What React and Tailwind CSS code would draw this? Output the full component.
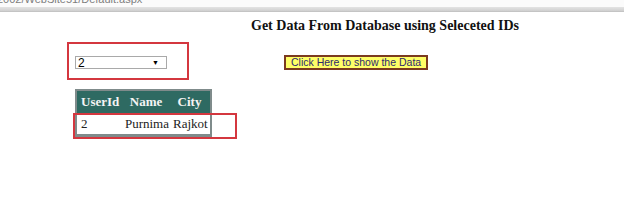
export default function App() {
  return (
    <div className="w-[624px] h-[214px] bg-white overflow-hidden relative" style={{ fontFamily: '"Liberation Serif", serif' }}>
      {/* address bar remnant */}
      <div className="h-[7px] overflow-hidden bg-[#fbfbfb]">
        <div className="-mt-[7px] -ml-[3px] text-[11px] leading-[13px] text-[#7e7e7e]" style={{ fontFamily: '"Liberation Sans", sans-serif' }}>
          2002/WebSite51/Default.aspx
        </div>
      </div>
      <div className="h-[5px] bg-gradient-to-b from-[#e4e4e4] to-[#cfcfcf] border-b border-[#c4c4c4]"></div>

      <h1 className="pl-[251px] pt-[5px] text-[14px] leading-[17px] font-bold text-[#111]">
        Get Data From Database using Seleceted IDs
      </h1>

      <div className="flex items-start mt-[8px]">
        <div className="ml-[67px] w-[122px] h-[38px] border-2 border-[#d4373f] pl-[6px] pt-[12px]">
          <div className="w-[92px] h-[13px] border border-[#a9a9a9] bg-white flex items-center justify-between pl-[2px] pr-[7px]" style={{ fontFamily: '"Liberation Sans", sans-serif' }}>
            <span className="text-[12px] leading-[12px] text-black">2</span>
            <span className="text-[7px] leading-[7px] text-black">▼</span>
          </div>
        </div>
        <button className="ml-[95px] mt-[13px] h-[15px] px-[5px] bg-[#ffff66] border-2 border-[#7b3a1f] text-[10.5px] leading-[11px] text-[#2d2a6e]" style={{ fontFamily: '"Liberation Sans", sans-serif' }}>
          Click Here to show the Data
        </button>
      </div>

      <div className="relative ml-[75px] mt-[9px] w-[137px]">
        <div className="border-[2px] border-[#7f8b8b] border-b-[3px]">
          <div className="flex h-[22px] items-center bg-[#2e6a62] text-[#f4f4f4] text-[13px] font-bold">
            <div className="w-[46px] pl-[4px]">UserId</div>
            <div className="w-[46px] text-center">Name</div>
            <div className="w-[41px] text-center">City</div>
          </div>
          <div className="flex h-[21px] items-center bg-white text-[13px] text-[#222]">
            <div className="w-[46px] pl-[4px]">2</div>
            <div className="w-[46px] text-right">Purnima</div>
            <div className="w-[41px] pl-[4px]">Rajkot</div>
          </div>
        </div>
        <div className="absolute left-[-2px] top-[24px] w-[164px] h-[26px] border-2 border-[#d4373f]"></div>
      </div>
    </div>
  );
}
